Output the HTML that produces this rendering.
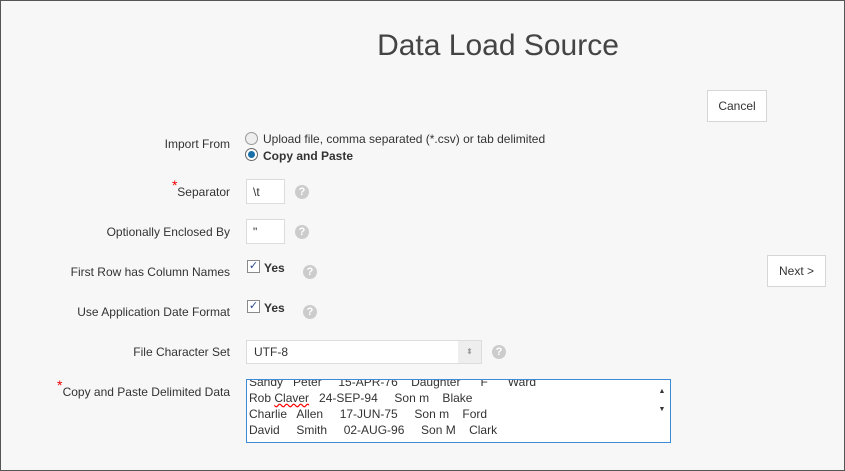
<!DOCTYPE html>
<html><head><style>
body{margin:0;width:845px;height:471px;overflow:hidden;background:#fff;font-family:"Liberation Sans",sans-serif;}
.f{position:absolute;left:0;top:0;width:843px;height:469px;border:1px solid #555;background:#f7f7f7;}
.a{position:absolute;}
.lbl{position:absolute;right:614px;font-size:12px;color:#333;white-space:nowrap;}
.in{position:absolute;background:#fff;border:1px solid #dcdcdc;font-size:12px;color:#333;box-sizing:border-box;padding:5px 6px;}
.q{position:absolute;width:14px;height:14px;border-radius:50%;background:#ccc;color:#fff;font-size:11px;font-weight:bold;text-align:center;line-height:14px;}
.btn{position:absolute;background:#fff;border:1px solid #d6d6d6;font-size:12px;color:#333;text-align:center;box-sizing:border-box;}
.cb{position:absolute;width:11px;height:11px;border:1px solid #8a8a8a;background:#fff;font-size:11px;line-height:11px;color:#2a4a8a;text-align:center;}
.star{color:#e00;font-size:14px;position:absolute;}
</style></head><body><div class="f">
<div class="a" style="left:0;width:994px;top:28px;text-align:center;font-size:30px;color:#444;">Data Load Source</div>
<div class="btn" style="left:706px;top:89px;width:60px;height:32px;line-height:30px;">Cancel</div>
<div class="btn" style="left:766px;top:254px;width:59px;height:32px;line-height:30px;">Next &gt;</div>

<div class="lbl" style="top:136px">Import From</div>
<div class="a" style="left:244px;top:131px;width:11px;height:11px;border-radius:50%;border:1px solid #999;background:#eee"></div>
<div class="a" style="left:262px;top:131px;font-size:12px;color:#333">Upload file, comma separated (*.csv) or tab delimited</div>
<div class="a" style="left:244px;top:147px;width:11px;height:11px;border-radius:50%;border:1px solid #666;background:#fff"><div style="margin:2px;width:7px;height:7px;border-radius:50%;background:#1a6fa8"></div></div>
<div class="a" style="left:262px;top:148px;font-size:12px;color:#333;font-weight:bold">Copy and Paste</div>

<div class="star" style="left:171px;top:176px">*</div>
<div class="lbl" style="top:184px">Separator</div>
<div class="in" style="left:245px;top:178px;width:39px;height:25px">\t</div>
<div class="q" style="left:294px;top:184px">?</div>

<div class="lbl" style="top:224px">Optionally Enclosed By</div>
<div class="in" style="left:245px;top:218px;width:39px;height:25px">"</div>
<div class="q" style="left:294px;top:224px">?</div>

<div class="lbl" style="top:264px">First Row has Column Names</div>
<div class="cb" style="left:246px;top:259px">✓</div>
<div class="a" style="left:263px;top:260px;font-size:12px;font-weight:bold;color:#333">Yes</div>
<div class="q" style="left:302px;top:264px">?</div>

<div class="lbl" style="top:304px">Use Application Date Format</div>
<div class="cb" style="left:246px;top:299px">✓</div>
<div class="a" style="left:263px;top:300px;font-size:12px;font-weight:bold;color:#333">Yes</div>
<div class="q" style="left:302px;top:304px">?</div>

<div class="lbl" style="top:344px">File Character Set</div>
<div class="in" style="left:245px;top:339px;width:236px;height:24px;padding:4px 7px">UTF-8</div>
<div class="a" style="left:457px;top:340px;width:23px;height:22px;background:#eee;color:#999;font-size:8px;text-align:center;line-height:22px">⬍</div>
<div class="q" style="left:491px;top:344px">?</div>

<div class="star" style="left:56px;top:376px">*</div>
<div class="lbl" style="top:384px">Copy and Paste Delimited Data</div>
<div class="a" style="left:245px;top:378px;width:423px;height:62px;border:1px solid #3c8ad8;background:#fff;overflow:hidden;font-size:12px;color:#333;">
<div style="position:absolute;left:2px;top:-6px;line-height:16px;white-space:pre">Sandy   Peter     15-APR-76    Daughter      F      Ward
Rob <span style="text-decoration:underline wavy red">Claver</span>   24-SEP-94     Son m    Blake
Charlie   Allen     17-JUN-75     Son m    Ford
David     Smith     02-AUG-96     Son M    Clark</div>
<div style="position:absolute;right:0;top:0;width:16px;height:62px;background:#fff;font-size:7px;color:#333;text-align:center"><div style="margin-top:8px">▲</div><div style="margin-top:11px">▼</div></div>
</div>
</div></body></html>
